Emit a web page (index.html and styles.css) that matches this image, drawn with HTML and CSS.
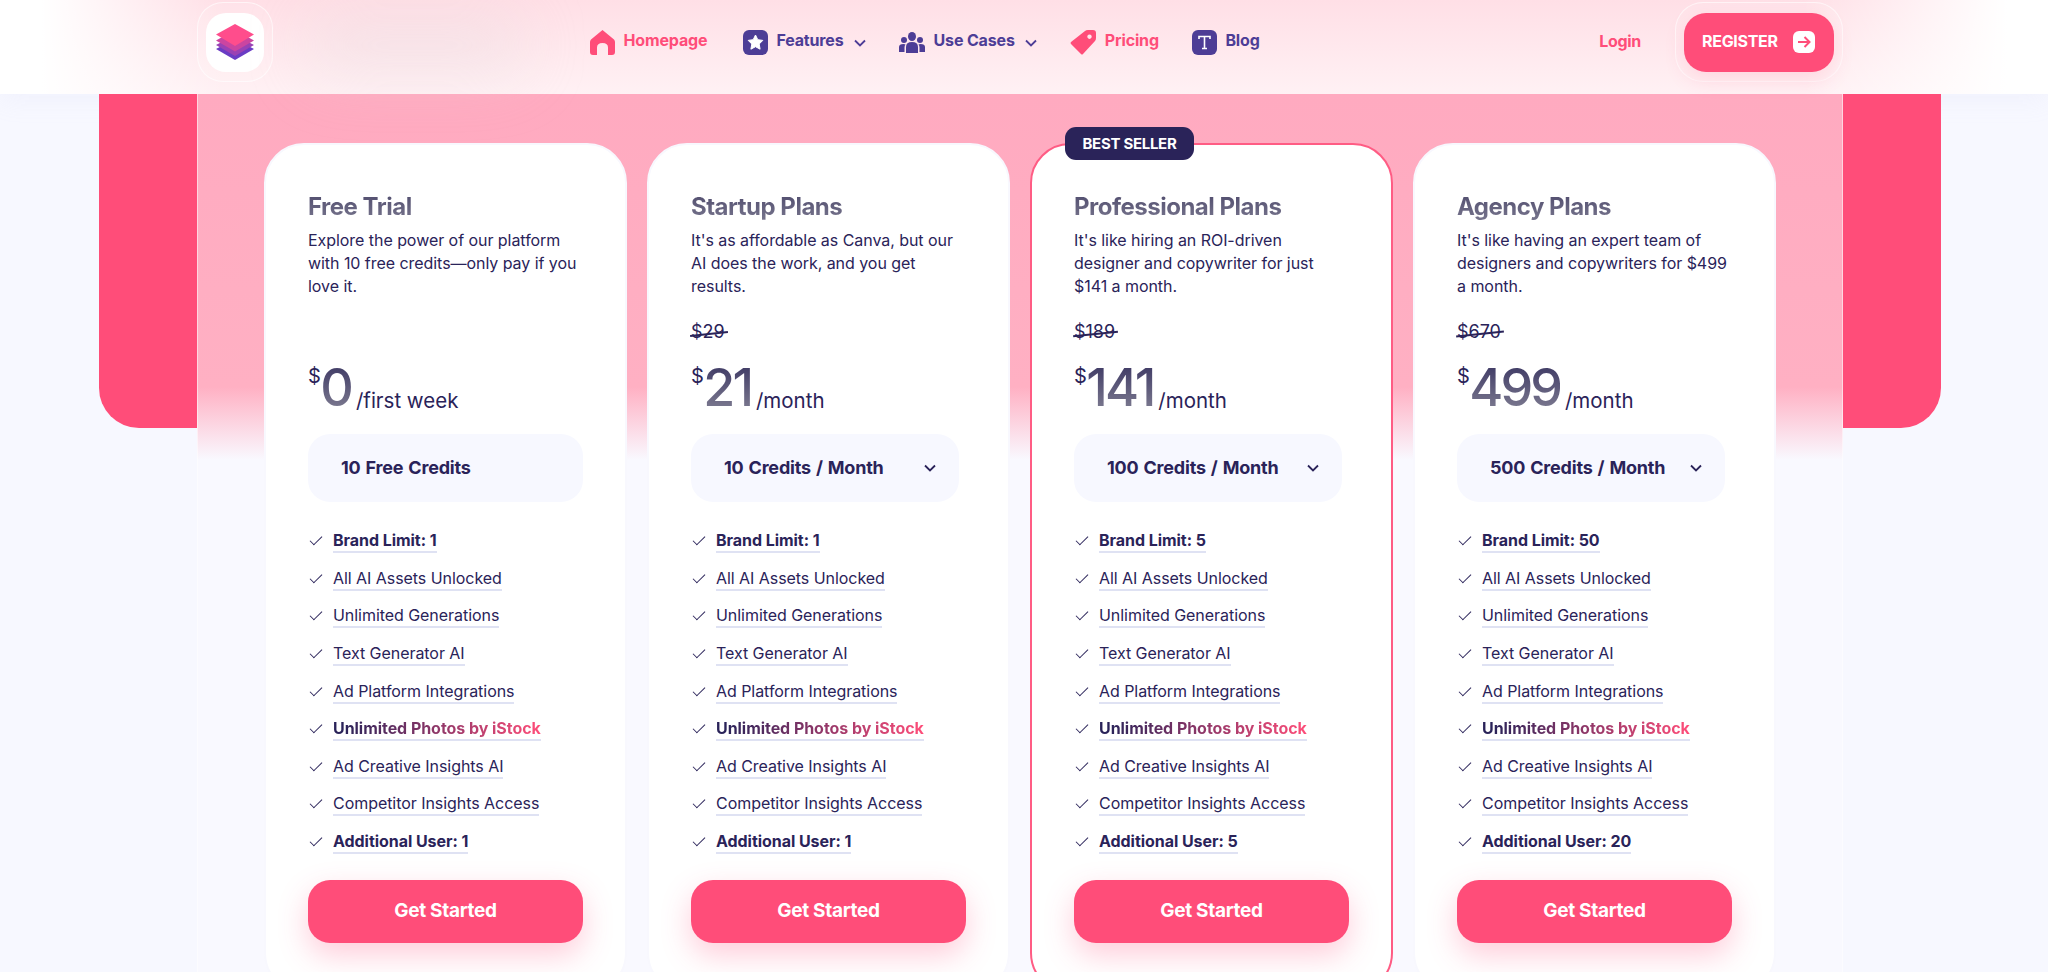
FILE: index.html
```html
<!DOCTYPE html>
<html lang="en">
<head>
  <meta charset="UTF-8">
  <title>Pricing</title>
  <link rel="stylesheet" href="styles.css">
</head>
<body>
  <div class="page">
    <header class="header">
      <div class="header-inner">
        <a class="logo-ring" href="#">
          <span class="logo-box">
            <svg width="38" height="36" viewBox="0 0 38 36">
              <path d="M19 15 38 25 19 36 0 25Z" fill="#6a3cc4"/>
              <path d="M19 11 38 21 19 32 0 21Z" fill="#9a41b4"/>
              <path d="M19 6 38 16.500 19 27.500 0 16.500Z" fill="#cb45a0"/>
              <path d="M19 0 38 10.500 19 22 0 10.500Z" fill="#ff4d8c"/>
            </svg>
          </span>
        </a>
        <span class="brand-blur"></span>
        <nav class="nav">
          <a class="nav-link pink" href="#">
            <svg width="25" height="25" viewBox="0 0 25 25"><path d="M12.500 0 24 9.500Q25 10.500 25 12V22Q25 25 22 25H18V17.500Q18 13 12.500 13T7 17.500V25H3Q0 25 0 22V12Q0 10.500 1 9.500Z" fill="#ff4d79"/></svg>
            Homepage
          </a>
          <a class="nav-link purple" href="#">
            <svg width="25" height="25" viewBox="0 0 25 25"><rect width="25" height="25" rx="6" fill="#4d3d96"/><path d="M12.500 5 14.800 9.700 19.800 10.400 16.200 14 17.100 19.200 12.500 16.700 7.900 19.200 8.800 14 5.200 10.400 10.200 9.700Z" fill="#fff" stroke="#fff" stroke-linejoin="round"/></svg>
            Features
            <svg class="caret" width="12" height="8" viewBox="0 0 12 8"><path d="M1 1.500 6 6.500 11 1.500" fill="none" stroke="#4d3d96" stroke-width="1.800"/></svg>
          </a>
          <a class="nav-link purple" href="#">
            <svg width="26" height="22" viewBox="0 0 26 22"><g fill="#4d3d96"><ellipse cx="13" cy="4.500" rx="4" ry="4.500"/><circle cx="5" cy="8" r="3"/><circle cx="21" cy="8" r="3"/><path d="M7 21V15Q7 10 13 10T19 15V21Z"/><path d="M0 20V15Q0 12 4.500 12 6 12 6.500 12.500 5.500 13.500 5.500 15.500V20Z"/><path d="M26 20V15Q26 12 21.500 12 20 12 19.500 12.500 20.500 13.500 20.500 15.500V20Z"/></g></svg>
            Use Cases
            <svg class="caret" width="12" height="8" viewBox="0 0 12 8"><path d="M1 1.500 6 6.500 11 1.500" fill="none" stroke="#4d3d96" stroke-width="1.800"/></svg>
          </a>
          <a class="nav-link pink" href="#">
            <svg width="26" height="25" viewBox="0 0 26 25"><path fill-rule="evenodd" d="M15 1Q16 0 18 0H23Q26 0 26 3V8Q26 10 25 11L13 24Q12 25 11 24L1 14Q0 13 1 12ZM19.500 4.500A2.200 2.200 0 1 0 19.501 4.500Z" fill="#ff4d79"/></svg>
            Pricing
          </a>
          <a class="nav-link purple" href="#">
            <svg width="25" height="25" viewBox="0 0 25 25"><rect width="25" height="25" rx="6" fill="#4d3d96"/><path d="M7 9V6.500H18V9M12.500 6.500V18.500M10 18.500H15" fill="none" stroke="#fff" stroke-width="1.600"/></svg>
            Blog
          </a>
        </nav>
        <div class="auth">
          <a class="login" href="#">Login</a>
          <div class="register-ring">
            <a class="register" href="#">
              REGISTER
              <svg width="22" height="22" viewBox="0 0 22 22"><rect width="22" height="22" rx="6" fill="#fff"/><path d="M5 11H16M11.500 6 16.500 11 11.500 16" fill="none" stroke="#ff4d79" stroke-width="2"/></svg>
            </a>
          </div>
        </div>
      </div>
    </header>

    <section class="pricing">
      <div class="band"></div>
      <div class="panel">

        <article class="card">
          <h3 class="plan-title">Free Trial</h3>
          <p class="plan-text">Explore the power of our platform with 10 free credits—only pay if you love it.</p>
          <div class="old-price"></div>
          <div class="price"><sup>$</sup><strong>0</strong><span class="per">/first week</span></div>
          <div class="credits full">10 Free Credits</div>
          <ul class="features">
            <li><span class="bold">Brand Limit: 1</span></li>
            <li><span>All AI Assets Unlocked</span></li>
            <li><span>Unlimited Generations</span></li>
            <li><span>Text Generator AI</span></li>
            <li><span>Ad Platform Integrations</span></li>
            <li><span class="bold"><em>Unlimited Photos by iStock</em></span></li>
            <li><span>Ad Creative Insights AI</span></li>
            <li><span>Competitor Insights Access</span></li>
            <li><span class="bold">Additional User: 1</span></li>
          </ul>
          <a class="cta" href="#">Get Started</a>
        </article>

        <article class="card">
          <h3 class="plan-title">Startup Plans</h3>
          <p class="plan-text">It's as affordable as Canva, but our AI does the work, and you get results.</p>
          <div class="old-price"><s>$29</s></div>
          <div class="price"><sup>$</sup><strong>21</strong><span class="per">/month</span></div>
          <div class="credits">10 Credits / Month
            <svg width="12" height="8" viewBox="0 0 12 8"><path d="M1 1.500 6 6.500 11 1.500" fill="none" stroke="#2a2359" stroke-width="1.800"/></svg>
          </div>
          <ul class="features">
            <li><span class="bold">Brand Limit: 1</span></li>
            <li><span>All AI Assets Unlocked</span></li>
            <li><span>Unlimited Generations</span></li>
            <li><span>Text Generator AI</span></li>
            <li><span>Ad Platform Integrations</span></li>
            <li><span class="bold"><em>Unlimited Photos by iStock</em></span></li>
            <li><span>Ad Creative Insights AI</span></li>
            <li><span>Competitor Insights Access</span></li>
            <li><span class="bold">Additional User: 1</span></li>
          </ul>
          <a class="cta" href="#">Get Started</a>
        </article>

        <article class="card featured">
          <span class="badge">BEST SELLER</span>
          <h3 class="plan-title">Professional Plans</h3>
          <p class="plan-text">It's like hiring an ROI-driven designer and copywriter for just $141 a month.</p>
          <div class="old-price"><s>$189</s></div>
          <div class="price"><sup>$</sup><strong>141</strong><span class="per">/month</span></div>
          <div class="credits">100 Credits / Month
            <svg width="12" height="8" viewBox="0 0 12 8"><path d="M1 1.500 6 6.500 11 1.500" fill="none" stroke="#2a2359" stroke-width="1.800"/></svg>
          </div>
          <ul class="features">
            <li><span class="bold">Brand Limit: 5</span></li>
            <li><span>All AI Assets Unlocked</span></li>
            <li><span>Unlimited Generations</span></li>
            <li><span>Text Generator AI</span></li>
            <li><span>Ad Platform Integrations</span></li>
            <li><span class="bold"><em>Unlimited Photos by iStock</em></span></li>
            <li><span>Ad Creative Insights AI</span></li>
            <li><span>Competitor Insights Access</span></li>
            <li><span class="bold">Additional User: 5</span></li>
          </ul>
          <a class="cta" href="#">Get Started</a>
        </article>

        <article class="card">
          <h3 class="plan-title">Agency Plans</h3>
          <p class="plan-text">It's like having an expert team of designers and copywriters for $499 a month.</p>
          <div class="old-price"><s>$670</s></div>
          <div class="price"><sup>$</sup><strong>499</strong><span class="per">/month</span></div>
          <div class="credits">500 Credits / Month
            <svg width="12" height="8" viewBox="0 0 12 8"><path d="M1 1.500 6 6.500 11 1.500" fill="none" stroke="#2a2359" stroke-width="1.800"/></svg>
          </div>
          <ul class="features">
            <li><span class="bold">Brand Limit: 50</span></li>
            <li><span>All AI Assets Unlocked</span></li>
            <li><span>Unlimited Generations</span></li>
            <li><span>Text Generator AI</span></li>
            <li><span>Ad Platform Integrations</span></li>
            <li><span class="bold"><em>Unlimited Photos by iStock</em></span></li>
            <li><span>Ad Creative Insights AI</span></li>
            <li><span>Competitor Insights Access</span></li>
            <li><span class="bold">Additional User: 20</span></li>
          </ul>
          <a class="cta" href="#">Get Started</a>
        </article>

      </div>
    </section>
  </div>
</body>
</html>
```

FILE: styles.css
```css
html, body {
  margin: 0;
  height: 100%;
  overflow: hidden;
}
body {
  font-family: "Inter", "Noto Sans", sans-serif;
  color: #2a2359;
  background-color: #f7f8ff;
}
a {
  text-decoration: none;
}
.page {
  width: 2040px;
}

/* header */
.header {
  height: 94px;
  width: 2048px;
  background:
    linear-gradient(90deg, #fff 2%, rgba(255,255,255,0) 11%, rgba(255,255,255,0) 88%, #fff 98%),
    linear-gradient(180deg, #ffdfe6, #fff1f4);
  box-shadow: 0 6px 24px rgba(200,200,240,0.12);
  display: flex;
  justify-content: flex-start;
}
.header-inner {
  position: relative;
  width: 1646px;
  margin-left: 197px;
  display: flex;
  align-items: center;
}
.logo-ring {
  width: 76px;
  height: 80px;
  box-sizing: border-box;
  border: 1px solid rgba(255,255,255,0.6);
  background: rgba(255,255,255,0.12);
  border-radius: 26px;
  display: flex;
  align-items: center;
  justify-content: center;
  margin-top: -10px;
}
.logo-box {
  width: 58px;
  height: 59px;
  background: #fff;
  border-radius: 20px;
  display: flex;
  align-items: center;
  justify-content: center;
}
.brand-blur {
  position: absolute;
  left: 110px;
  top: 14px;
  width: 220px;
  height: 62px;
  border-radius: 30px;
  background: rgba(225,215,220,0.3);
  filter: blur(30px);
}
.nav {
  display: flex;
  align-items: center;
  gap: 33px;
  margin-left: 317px;
  margin-top: -14px;
  font-size: 16px;
  font-weight: 700;
}
.nav-link {
  display: flex;
  align-items: center;
  gap: 8.500px;
  letter-spacing: -0.15px;
}
.nav-link:first-child {
  margin-right: 2.500px;
}
.nav-link svg {
  margin-top: 5px;
}
.nav-link.pink {
  color: #ff4d79;
}
.nav-link.purple {
  color: #4d3d96;
}
.nav-link .caret {
  margin-left: 2px;
  margin-top: 6px;
}
.auth {
  margin-left: auto;
  display: flex;
  align-items: center;
  gap: 34px;
  margin-top: -10px;
}
.login {
  color: #ff4d79;
  font-size: 16px;
  font-weight: 700;
  letter-spacing: -0.3px;
  margin-top: -2px;
}
.register-ring {
  width: 168px;
  height: 80px;
  box-sizing: border-box;
  border: 1px solid rgba(255,255,255,0.6);
  background: rgba(255,255,255,0.12);
  border-radius: 28px;
  display: flex;
  align-items: center;
  justify-content: center;
}
.register {
  width: 150px;
  height: 59px;
  box-sizing: border-box;
  padding: 0 19px 2px 18px;
  border-radius: 22px;
  background: #ff4d79;
  box-shadow: 0 8px 20px rgba(255,77,121,0.15);
  color: #fff;
  font-size: 16px;
  font-weight: 700;
  letter-spacing: -0.3px;
  display: flex;
  align-items: center;
  justify-content: space-between;
}
.register svg {
  margin-top: 2px;
}

/* pricing */
.pricing {
  display: grid;
  margin: 0 99px;
}
.band {
  grid-area: 1 / 1;
  height: 334px;
  background-color: #ff4d79;
  border-radius: 0 0 40px 40px;
}
.panel {
  grid-area: 1 / 1;
  margin: 0 98px;
  padding-top: 49px;
  display: flex;
  justify-content: center;
  gap: 20px;
  box-sizing: border-box;
  border-left: 1px solid rgba(255,255,255,0.5);
  border-right: 1px solid rgba(255,255,255,0.5);
  background: linear-gradient(180deg, #ffaac0 0, #ffb0c3 293px, #f9f9ff 366px);
}
.card {
  position: relative;
  width: 363px;
  height: 850px;
  box-sizing: border-box;
  padding: 47px 42px 0;
  background-color: #fff;
  border: 2px solid #f8f8fe;
  border-radius: 40px;
}
.card.featured {
  border-color: #ff5c84;
}
.badge {
  position: absolute;
  left: 33px;
  top: -18px;
  width: 129px;
  height: 33px;
  border-radius: 11px;
  background-color: #2a2359;
  color: #fff;
  font-size: 15px;
  font-weight: 700;
  letter-spacing: -0.3px;
  display: flex;
  align-items: center;
  justify-content: center;
}
.plan-title {
  margin: 0;
  font-size: 24px;
  line-height: 30px;
  font-weight: 700;
  letter-spacing: -0.5px;
  background: linear-gradient(180deg, #4e4a6c, #7a788f);
  -webkit-background-clip: text;
  background-clip: text;
  color: transparent;
}
.plan-text {
  margin: 7px 0 0;
  width: 272px;
  height: 69px;
  font-size: 16px;
  line-height: 23px;
  letter-spacing: -0.05px;
}
.old-price {
  margin-top: 21.500px;
  height: 24px;
  font-size: 18px;
  line-height: 24px;
}
.old-price s {
  position: relative;
  text-decoration: none;
}
.old-price s::after {
  content: "";
  position: absolute;
  left: -1px;
  right: -3px;
  top: 12px;
  height: 1.500px;
  background-color: #2a2359;
  transform: rotate(-6deg);
}
.price {
  margin-top: 20px;
  height: 48px;
  display: flex;
  align-items: flex-end;
}
.price sup {
  font-size: 20px;
  line-height: 20px;
  align-self: flex-start;
  margin-right: -0.500px;
  margin-top: 2px;
}
.price strong {
  font-size: 52px;
  line-height: 48px;
  font-weight: 500;
  letter-spacing: -3px;
  background: linear-gradient(180deg, #3e3964, #7f7d92);
  -webkit-background-clip: text;
  background-clip: text;
  color: transparent;
}
.per {
  font-size: 20.500px;
  line-height: 26px;
  margin-left: 5px;
  margin-bottom: -2px;
}
.credits {
  margin-top: 22.500px;
  width: 268px;
  height: 68px;
  box-sizing: border-box;
  padding: 0 23px 2px 33px;
  border-radius: 22px;
  background-color: #f7f8ff;
  font-size: 18px;
  font-weight: 700;
  letter-spacing: -0.2px;
  word-spacing: 1px;
  display: flex;
  align-items: center;
  justify-content: space-between;
}
.credits svg {
  margin-top: 2px;
}
.credits.full {
  width: 275px;
}
.features {
  list-style: none;
  margin: 20.500px 0 0;
  padding: 0;
  font-size: 16px;
}
.features li {
  height: 37.600px;
  display: flex;
  align-items: center;
  gap: 11px;
  letter-spacing: -0.05px;
}
.features li::before {
  content: "";
  width: 11px;
  height: 5px;
  margin-left: 2px;
  margin-top: -4px;
  border-left: 1.500px solid #2a2359;
  border-bottom: 1.500px solid #2a2359;
  transform: rotate(-45deg);
  flex: none;
}
.features span {
  line-height: 22px;
  border-bottom: 2px solid #dfe2f3;
}
.features .bold {
  font-weight: 700;
}
.features em {
  font-style: normal;
  background: linear-gradient(90deg, #2a2359 5%, #ff4d79 100%);
  -webkit-background-clip: text;
  background-clip: text;
  color: transparent;
}
.cta {
  margin-top: 19.100px;
  height: 63px;
  box-sizing: border-box;
  padding-bottom: 2px;
  border-radius: 22px;
  background-color: #ff4d79;
  box-shadow: 0 12px 30px rgba(255,77,121,0.28);
  color: #fff;
  font-size: 19px;
  font-weight: 700;
  letter-spacing: -0.3px;
  display: flex;
  align-items: center;
  justify-content: center;
}
```
